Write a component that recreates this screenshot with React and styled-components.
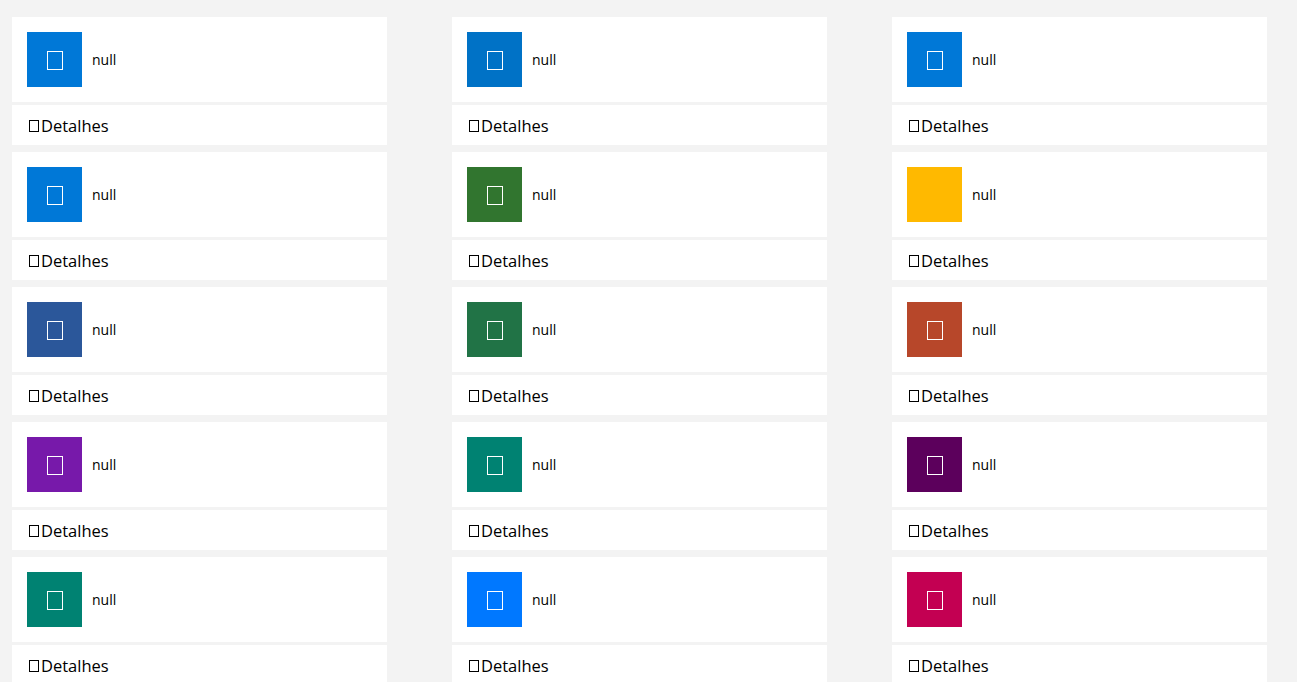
import styled, { createGlobalStyle } from "styled-components";

const GlobalStyle = createGlobalStyle`
    html, body {
        margin : 0;
        height : 100%;
        overflow : hidden;
        background-color : #f3f3f3;
    }
`
const Page = styled.div`
    display : grid;
    grid-template-columns : repeat(3, 375px);
    column-gap : 65px;
    row-gap : 7px;
    padding : 17px 0 0 12px;
    font-family : "Open Sans", "Noto Sans", sans-serif;
    color : #000;
`
const Item = styled.div`
    display : flex;
    flex-direction : column;
    gap : 3px;
`
const AppCard = styled.div`
    display : flex;
    align-items : center;
    gap : 10px;
    height : 85px;
    padding : 0 15px;
    background-color : #fff;
`
const Tile = styled.div`
    display : flex;
    align-items : center;
    justify-content : center;
    width : 55px;
    height : 55px;
    background-color : ${props => props.$color};
`
const TileGlyph = styled.span`
    box-sizing : border-box;
    width : 16px;
    height : 19px;
    margin-top : 2px;
    border : 1px solid ${props => props.$hidden ? "transparent" : "#fff"};
`
const AppName = styled.span`
    font-size : 14px;
    line-height : 20px;
`
const DetailsBar = styled.div`
    display : flex;
    align-items : center;
    height : 40px;
    padding-left : 17px;
    background-color : #fff;
    font-size : 16.5px;
`
const DetailsGlyph = styled.span`
    box-sizing : border-box;
    width : 10px;
    height : 12px;
    margin : 2px 2px 0 0;
    border : 1px solid #000;
`

const colors = [
    "#0078d7", "#0072c6", "#0078d7",
    "#0078d7", "#31752f", "#ffb900",
    "#2b579a", "#217346", "#b7472a",
    "#7719aa", "#008272", "#5c005c",
    "#008272", "#0078ff", "#c30052",
];

function App(){
    return (
        <>
            <GlobalStyle />
            <Page>
                {colors.map((color, i) => (
                    <Item key={i}>
                        <AppCard>
                            <Tile $color={color}>
                                <TileGlyph $hidden={color === "#ffb900"} />
                            </Tile>
                            <AppName>null</AppName>
                        </AppCard>
                        <DetailsBar>
                            <DetailsGlyph />
                            Detalhes
                        </DetailsBar>
                    </Item>
                ))}
            </Page>
        </>
    )
}
export default App;
